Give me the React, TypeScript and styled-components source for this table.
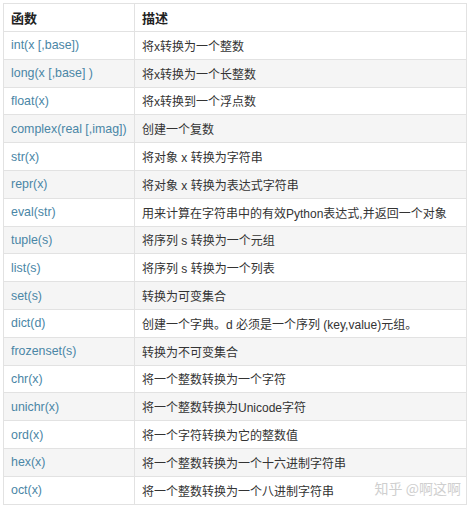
import styled, { createGlobalStyle } from "styled-components";

const GlobalStyle = createGlobalStyle`
    body {
        margin: 0;
        background: #fff;
        font-family: "Liberation Sans", "Noto Sans CJK SC", sans-serif;
    }
`;

const Wrap = styled.div`
    position: relative;
    padding: 3px 0 0 3px;
    width: 464px;
`;

const Table = styled.table`
    width: 464px;
    border-collapse: collapse;
    table-layout: fixed;
    font-size: 12px;
`;

const HeadCell = styled.th<{ $first?: boolean }>`
    box-sizing: border-box;
    width: ${(p) => (p.$first ? "131px" : "auto")};
    height: 28px;
    padding: 0 7px;
    border: 1px solid #e2e2e2;
    text-align: left;
    font-weight: 700;
    font-size: 13px;
    color: #222;
    background: #fff;
`;

const Row = styled.tr<{ $shaded: boolean }>`
    height: 27.8px;
    background: ${(p) => (p.$shaded ? "#f5f5f5" : "#fff")};
`;

const FuncCell = styled.td`
    padding: 0 7px;
    border: 1px solid #e2e2e2;
    color: #4a86a6;
    font-size: 12.4px;
    white-space: nowrap;
`;

const DescCell = styled.td`
    padding: 0 7px;
    border: 1px solid #e2e2e2;
    color: #333;
    white-space: nowrap;
`;

const Watermark = styled.span`
    position: absolute;
    right: 6px;
    bottom: 7px;
    font-size: 14px;
    color: #cfcfcf;
    font-family: "Noto Sans CJK SC", sans-serif;
`;

const rows: [string, string][] = [
    ["int(x [,base])", "将x转换为一个整数"],
    ["long(x [,base] )", "将x转换为一个长整数"],
    ["float(x)", "将x转换到一个浮点数"],
    ["complex(real [,imag])", "创建一个复数"],
    ["str(x)", "将对象 x 转换为字符串"],
    ["repr(x)", "将对象 x 转换为表达式字符串"],
    ["eval(str)", "用来计算在字符串中的有效Python表达式,并返回一个对象"],
    ["tuple(s)", "将序列 s 转换为一个元组"],
    ["list(s)", "将序列 s 转换为一个列表"],
    ["set(s)", "转换为可变集合"],
    ["dict(d)", "创建一个字典。d 必须是一个序列 (key,value)元组。"],
    ["frozenset(s)", "转换为不可变集合"],
    ["chr(x)", "将一个整数转换为一个字符"],
    ["unichr(x)", "将一个整数转换为Unicode字符"],
    ["ord(x)", "将一个字符转换为它的整数值"],
    ["hex(x)", "将一个整数转换为一个十六进制字符串"],
    ["oct(x)", "将一个整数转换为一个八进制字符串"],
];

export default function App() {
    return (
        <>
            <GlobalStyle />
            <Wrap>
                <Table>
                    <thead>
                        <tr>
                            <HeadCell $first>函数</HeadCell>
                            <HeadCell>描述</HeadCell>
                        </tr>
                    </thead>
                    <tbody>
                        {rows.map(([fn, desc], i) => (
                            <Row key={fn} $shaded={i % 2 === 1}>
                                <FuncCell>{fn}</FuncCell>
                                <DescCell>{desc}</DescCell>
                            </Row>
                        ))}
                    </tbody>
                </Table>
                <Watermark>知乎 @啊这啊</Watermark>
            </Wrap>
        </>
    );
}
